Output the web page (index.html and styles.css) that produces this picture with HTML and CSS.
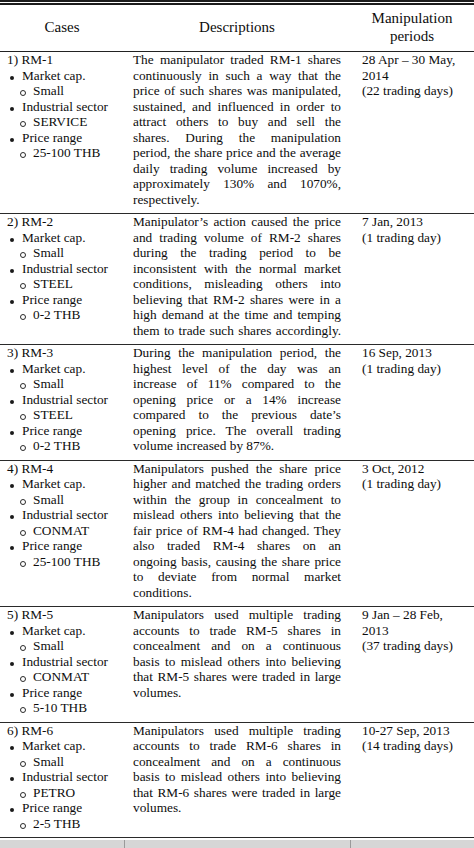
FILE: index.html
```html
<!DOCTYPE html>
<html lang="en">
<head>
<meta charset="utf-8">
<title>Manipulation cases</title>
<link rel="stylesheet" href="styles.css">
</head>
<body>
<table class="t">
<colgroup><col class="w1"><col class="w2"><col class="w3"></colgroup>
<thead>
<tr><th>Cases</th><th>Descriptions</th><th>Manipulation<br>periods</th></tr>
</thead>
<tbody>
<tr>
<td class="c1"><div>1) RM-1</div><div class="b1">Market cap.</div><div class="b2">Small</div><div class="b1">Industrial sector</div><div class="b2">SERVICE</div><div class="b1">Price range</div><div class="b2">25-100 THB</div></td>
<td class="c2"><span class="l">The manipulator traded RM-1 shares</span><span class="l">continuously in such a way that the</span><span class="l">price of such shares was manipulated,</span><span class="l">sustained, and influenced in order to</span><span class="l">attract others to buy and sell the</span><span class="l">shares. During the manipulation</span><span class="l">period, the share price and the average</span><span class="l">daily trading volume increased by</span><span class="l">approximately 130% and 1070%,</span><span class="l end">respectively.</span></td>
<td class="c3">28 Apr – 30 May,<br>2014<br>(22 trading days)</td>
</tr>
<tr>
<td class="c1"><div>2) RM-2</div><div class="b1">Market cap.</div><div class="b2">Small</div><div class="b1">Industrial sector</div><div class="b2">STEEL</div><div class="b1">Price range</div><div class="b2">0-2 THB</div></td>
<td class="c2"><span class="l">Manipulator’s action caused the price</span><span class="l">and trading volume of RM-2 shares</span><span class="l">during the trading period to be</span><span class="l">inconsistent with the normal market</span><span class="l">conditions, misleading others into</span><span class="l">believing that RM-2 shares were in a</span><span class="l">high demand at the time and temping</span><span class="l">them to trade such shares accordingly.</span></td>
<td class="c3">7 Jan, 2013<br>(1 trading day)</td>
</tr>
<tr>
<td class="c1"><div>3) RM-3</div><div class="b1">Market cap.</div><div class="b2">Small</div><div class="b1">Industrial sector</div><div class="b2">STEEL</div><div class="b1">Price range</div><div class="b2">0-2 THB</div></td>
<td class="c2"><span class="l">During the manipulation period, the</span><span class="l">highest level of the day was an</span><span class="l">increase of 11% compared to the</span><span class="l">opening price or a 14% increase</span><span class="l">compared to the previous date’s</span><span class="l">opening price. The overall trading</span><span class="l end">volume increased by 87%.</span></td>
<td class="c3">16 Sep, 2013<br>(1 trading day)</td>
</tr>
<tr>
<td class="c1"><div>4) RM-4</div><div class="b1">Market cap.</div><div class="b2">Small</div><div class="b1">Industrial sector</div><div class="b2">CONMAT</div><div class="b1">Price range</div><div class="b2">25-100 THB</div></td>
<td class="c2"><span class="l">Manipulators pushed the share price</span><span class="l">higher and matched the trading orders</span><span class="l">within the group in concealment to</span><span class="l">mislead others into believing that the</span><span class="l">fair price of RM-4 had changed. They</span><span class="l">also traded RM-4 shares on an</span><span class="l">ongoing basis, causing the share price</span><span class="l">to deviate from normal market</span><span class="l end">conditions.</span></td>
<td class="c3">3 Oct, 2012<br>(1 trading day)</td>
</tr>
<tr>
<td class="c1"><div>5) RM-5</div><div class="b1">Market cap.</div><div class="b2">Small</div><div class="b1">Industrial sector</div><div class="b2">CONMAT</div><div class="b1">Price range</div><div class="b2">5-10 THB</div></td>
<td class="c2"><span class="l">Manipulators used multiple trading</span><span class="l">accounts to trade RM-5 shares in</span><span class="l">concealment and on a continuous</span><span class="l">basis to mislead others into believing</span><span class="l">that RM-5 shares were traded in large</span><span class="l end">volumes.</span></td>
<td class="c3">9 Jan – 28 Feb,<br>2013<br>(37 trading days)</td>
</tr>
<tr>
<td class="c1"><div>6) RM-6</div><div class="b1">Market cap.</div><div class="b2">Small</div><div class="b1">Industrial sector</div><div class="b2">PETRO</div><div class="b1">Price range</div><div class="b2">2-5 THB</div></td>
<td class="c2"><span class="l">Manipulators used multiple trading</span><span class="l">accounts to trade RM-6 shares in</span><span class="l">concealment and on a continuous</span><span class="l">basis to mislead others into believing</span><span class="l">that RM-6 shares were traded in large</span><span class="l end">volumes.</span></td>
<td class="c3">10-27 Sep, 2013<br>(14 trading days)</td>
</tr>
</tbody>
</table>
<div class="tail"><div class="tc"></div><div class="tc sep"></div><div class="tc sep"></div></div>
</body>
</html>
```
FILE: styles.css
```css
html, body {
  margin: 0;
  padding: 0;
  background: #ffffff;
}
body {
  width: 474px;
  height: 848px;
  overflow: hidden;
  color: #0d0d0d;
  font-family: "Liberation Serif", "Times New Roman", serif;
  font-size: 13.3px;
  line-height: 15.5px;
}
.t {
  width: 474px;
  border-collapse: collapse;
  table-layout: fixed;
  border-top: 5px double #1c1c1c;
}
.w1 { width: 124px; }
.w2 { width: 226px; }
.w3 { width: 124px; }
th {
  font-weight: normal;
  font-size: 15px;
  line-height: 18px;
  text-align: center;
  vertical-align: middle;
  padding: 4px 0 6px;
  border-bottom: 1.5px solid #222;
}
td {
  vertical-align: top;
  padding: 0 0 6px;
  border-bottom: 1.5px solid #2a2a2a;
}
td.c1 { padding-left: 7px; }
td.c2 { padding-left: 9px; padding-right: 9px; }
td.c3 { padding-left: 12px; }
.b1 {
  position: relative;
  padding-left: 15px;
}
.b1::before {
  content: "";
  position: absolute;
  left: 3px;
  top: 8px;
  width: 4px;
  height: 4px;
  border-radius: 50%;
  background: #1a1a1a;
}
.b2 {
  position: relative;
  padding-left: 26px;
}
.b2::before {
  content: "";
  position: absolute;
  left: 13px;
  top: 7px;
  width: 4px;
  height: 4px;
  border-radius: 50%;
  border: 1px solid #2a2a2a;
}
.l {
  display: block;
  text-align: justify;
  text-align-last: justify;
}
.l.end {
  text-align-last: left;
}
.tail {
  display: grid;
  grid-template-columns: 124px 226px 124px;
  height: 30px;
  margin-top: 2px;
  background: #d6d6d6;
}
.tc.sep {
  border-left: 1px solid #9a9a9a;
}
```
